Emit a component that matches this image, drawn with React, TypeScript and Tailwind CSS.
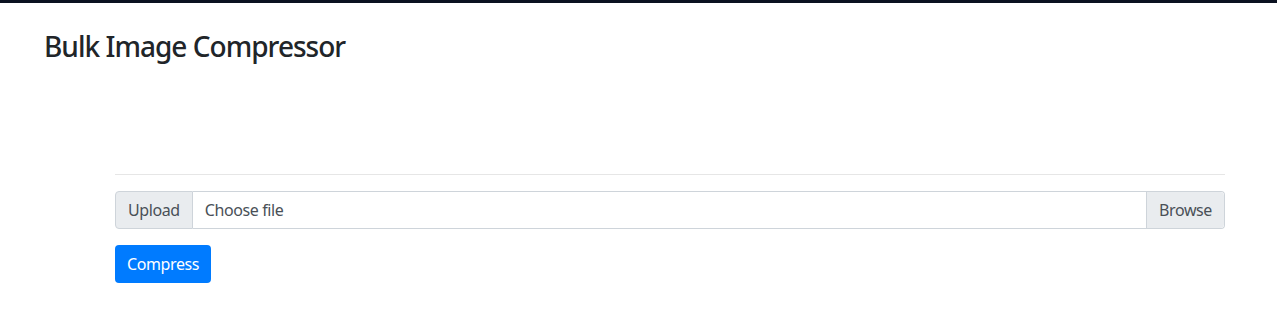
import React from "react";

const font = { fontFamily: '"Noto Sans", "Open Sans", sans-serif' };

export default function App() {
  return (
    <div className="min-h-[311px] bg-white border-t-[3px] border-[#0b1120] text-[#212529]" style={font}>
      <h3 className="pl-[44px] pt-[27px] text-[28px] leading-[1.2] font-medium tracking-[-0.035em]">
        Bulk Image Compressor
      </h3>

      <div className="ml-[115px] w-[1110px] mt-[110px] tracking-[-0.025em]">
        <hr className="border-t border-[#e6e6e6]" />

        <div className="mt-[16px] flex h-[38px] text-[16px]">
          <span className="flex items-center px-3 bg-[#e9ecef] text-[#495057] border border-[#ced4da] rounded-l">
            Upload
          </span>
          <label className="flex flex-1 items-center justify-between bg-white border border-l-0 border-[#ced4da] rounded-r text-[#495057]">
            <span className="pl-3">Choose file</span>
            <span className="flex h-full items-center px-3 bg-[#e9ecef] border-l border-[#ced4da] rounded-r">
              Browse
            </span>
          </label>
        </div>

        <button className="mt-4 h-[38px] px-3 bg-[#007bff] text-white text-[16px] rounded">
          Compress
        </button>
      </div>
    </div>
  );
}
